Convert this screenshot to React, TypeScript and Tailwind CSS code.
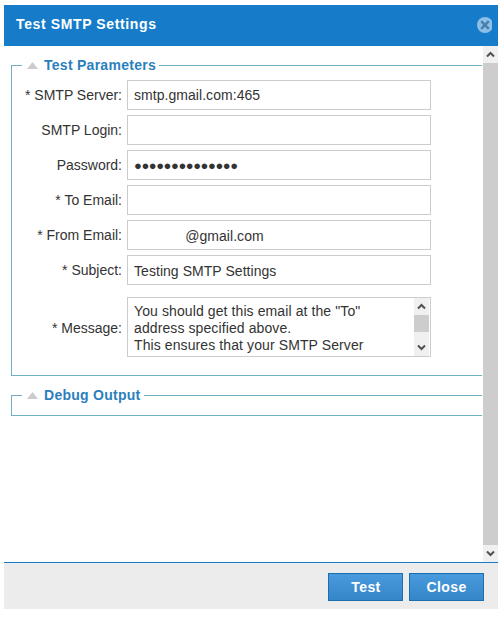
import React from "react";

const labelCls = "w-[110px] shrink-0 text-right";

function Chevron({ down = false }: { down?: boolean }) {
  return (
    <svg width="9" height="7" viewBox="0 0 9 7" className={down ? "rotate-180" : ""}>
      <path d="M1 5.5 L4.5 2 L8 5.5" fill="none" stroke="#505050" strokeWidth="2" />
    </svg>
  );
}

function Row({ label, value, down, children }: { label: string; value?: string; down?: boolean; children?: React.ReactNode }) {
  return (
    <div className="flex items-center h-[30px]">
      <label className={labelCls}>{label}</label>
      <div className={`ml-[5px] w-[304px] h-[30px] border border-[#cccccc] bg-white px-[6px] flex items-center ${down ? "pt-[3px]" : "pt-[1px]"}`}>
        {children ?? <span className="whitespace-pre tracking-[0.05px]">{value}</span>}
      </div>
    </div>
  );
}

function Legend({ title }: { title: string }) {
  return (
    <legend className="ml-[10px] pl-[5px] pr-[3px] flex items-center gap-[6px] font-bold text-[14px] leading-[16px] text-[#2b7fbd] tracking-[0.27px]">
      <svg width="11" height="7" viewBox="0 0 11 7">
        <path d="M5.5 0 L11 7 L0 7 Z" fill="#cccccc" />
      </svg>
      {title}
    </legend>
  );
}

export default function App() {
  return (
    <div className="w-[504px] h-[618px] bg-white pt-[5px] pl-[4px] font-['Liberation_Sans',Arial,sans-serif] text-[14px] text-[#333333]">
      <div className="w-[494px] h-[604px] flex flex-col">
        <div className="h-[41px] shrink-0 bg-[#167cc9] flex items-center justify-between pl-[12px] pr-[6px] pb-[2px]">
          <span className="text-white font-bold text-[14px] tracking-[0.62px]">Test SMTP Settings</span>
          <svg width="15" height="16" viewBox="0 0 15 16">
            <circle cx="8" cy="8" r="8" fill="#8cc0e8" />
            <path d="M4.2 4.2 L11.8 11.8 M11.8 4.2 L4.2 11.8" stroke="#4a80ad" strokeWidth="2.6" />
          </svg>
        </div>

        <div className="h-[516px] shrink-0 flex">
          <div className="flex-1 min-w-0 pl-[7px] pr-[1px] pt-[11px]">
            <fieldset className="border border-[#6fafc0] border-r-0 h-[319px]">
              <Legend title="Test Parameters" />
              <div className="flex flex-col gap-[5px] pt-[7px]">
                <Row label="* SMTP Server:" value="smtp.gmail.com:465" />
                <Row label="SMTP Login:" value="" />
                <Row label="Password:">
                  <span className="text-[13px] tracking-[-0.45px] leading-none text-[#333333]">●●●●●●●●●●●●●●</span>
                </Row>
                <Row label="* To Email:" value="" />
                <Row label="* From Email:" value="             @gmail.com" down />
                <Row label="* Subject:" value="Testing SMTP Settings" down />
                <div className="flex items-center h-[60px] mt-[7px]">
                  <label className={`${labelCls} pt-[2px]`}>* Message:</label>
                  <div className="ml-[5px] w-[304px] h-[60px] border border-[#cccccc] bg-white flex">
                    <div className="flex-1 min-w-0 px-[6px] pt-[5px] leading-[17px] tracking-[0.1px] overflow-hidden whitespace-nowrap">
                      <p>You should get this email at the "To"</p>
                      <p>address specified above.</p>
                      <p>This ensures that your SMTP Server</p>
                    </div>
                    <div className="w-[15px] shrink-0 mr-[1px] bg-[#f0f0f0] flex flex-col">
                      <div className="h-[17px] flex items-center justify-center"><Chevron /></div>
                      <div className="h-[17px] bg-[#cdcdcd]" />
                      <div className="flex-1" />
                      <div className="h-[17px] flex items-center justify-center"><Chevron down /></div>
                    </div>
                  </div>
                </div>
              </div>
            </fieldset>
            <fieldset className="border border-[#6fafc0] border-r-0 h-[29px] mt-[11px]">
              <Legend title="Debug Output" />
            </fieldset>
          </div>
          <div className="w-[15px] shrink-0 bg-[#cdcdcd] flex flex-col justify-between">
            <div className="h-[17px] bg-[#f0f0f0] flex items-center justify-center"><Chevron /></div>
            <div className="h-[17px] bg-[#f0f0f0] flex items-center justify-center"><Chevron down /></div>
          </div>
        </div>

        <div className="flex-1 bg-[#ececec] border-t border-[#167cc9] flex justify-end items-start gap-[6px] pt-[10px] pr-[14px]">
          <button className="w-[75px] h-[28px] pl-[1px] border border-[#1a6fb0] bg-gradient-to-b from-[#4a9ade] to-[#3585c9] text-white font-bold text-[14px] tracking-[0.4px]">Test</button>
          <button className="w-[75px] h-[28px] border border-[#1a6fb0] bg-gradient-to-b from-[#4a9ade] to-[#3585c9] text-white font-bold text-[14px] tracking-[0.4px]">Close</button>
        </div>
      </div>
    </div>
  );
}
